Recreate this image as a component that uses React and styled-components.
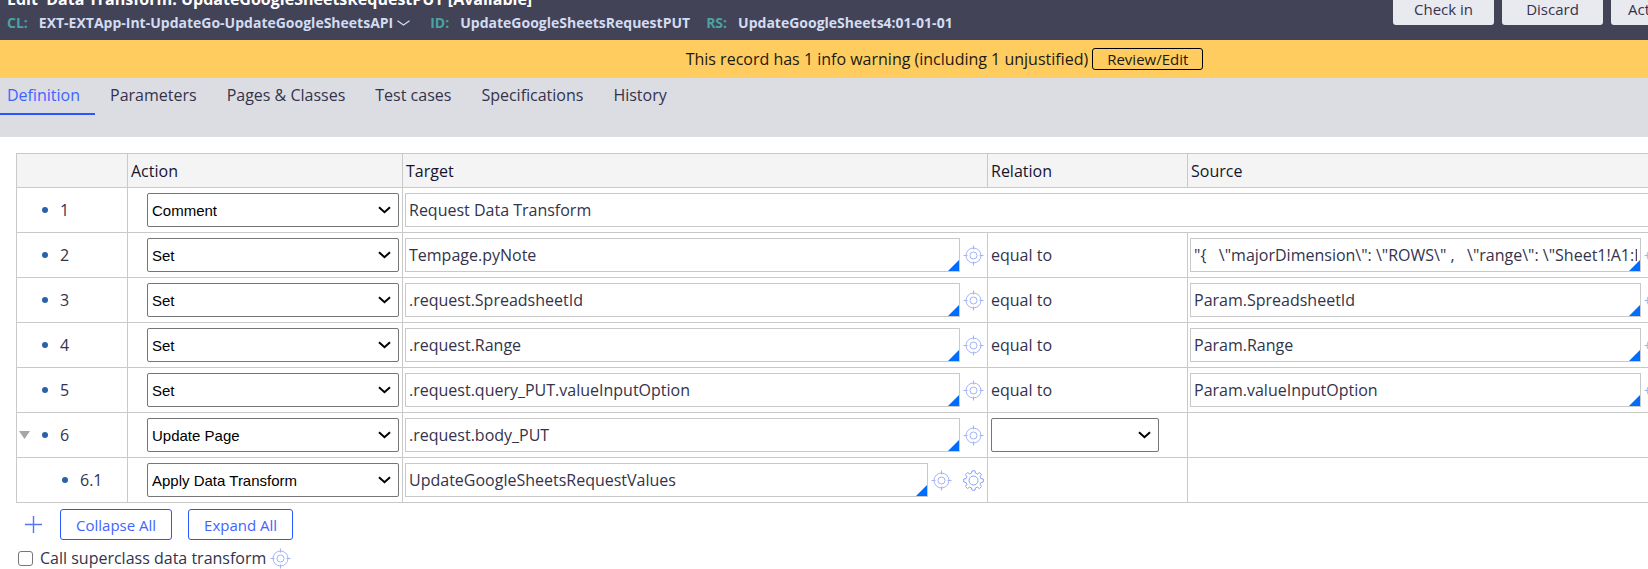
import React from 'react';
import styled, { createGlobalStyle } from 'styled-components';

const GlobalStyle = createGlobalStyle`
  *, *::before, *::after { box-sizing: border-box; }
  body {
    margin: 0;
    overflow: hidden;
    background: #fff;
    color: #33334c;
    font: 400 16px/22px "Open Sans", sans-serif;
  }
  button, input { font: inherit; color: inherit; }
`;

const Header = styled.header`
  display: flex;
  justify-content: space-between;
  align-items: flex-end;
  height: 40px;
  padding-left: 7px;
  overflow: hidden;
  background: #424357;
`;

const Heading = styled.div`
  padding-bottom: 7px;
  white-space: nowrap;
`;

const Title = styled.h1`
  margin: 0 0 3px;
  color: #fff;
  font-size: 16px;
  line-height: 22px;
  font-weight: 700;
  white-space: pre;
`;

const Keys = styled.dl`
  display: flex;
  gap: 16px;
  margin: 0;
  font-size: 14px;
  line-height: 20px;
  font-weight: 700;
`;

const KeyPair = styled.div`
  display: flex;
  align-items: center;
  gap: 11px;
  dt { color: #4aa3a3; }
  dd { display: flex; align-items: center; gap: 4px; margin: 0; color: #d3dcf2; }
  svg { margin-right: 4px; }
`;

const HeaderActions = styled.div`
  display: flex;
  flex-shrink: 0;
  gap: 8px;
  margin: 0 -64px 15px 0;
`;

const HeaderButton = styled.button`
  display: flex;
  justify-content: ${(p) => (p.$menu ? 'space-between' : 'center')};
  align-items: center;
  width: 101px;
  height: 32px;
  padding: 0 ${(p) => (p.$menu ? 17 : 0)}px;
  border: 0;
  border-radius: 3px;
  background: #e9e9f0;
  font-size: 15px;
`;

const Warning = styled.div`
  display: flex;
  justify-content: center;
  align-items: center;
  gap: 4px;
  height: 38px;
  padding-left: 241px;
  background: #ffcc60;
  color: #1c1a12;
`;

const ReviewButton = styled.button`
  height: 22px;
  padding: 0 14px;
  border: 1px solid #000;
  border-radius: 3px;
  background: transparent;
  font-size: 15px;
  line-height: 20px;
`;

const Tabs = styled.nav`
  display: flex;
  align-items: flex-start;
  height: 59px;
  background: #dcdde2;
`;

const Tab = styled.a`
  padding: 6px 15px 7px;
  border-bottom: 2px solid ${(p) => (p.$active ? '#2a55ff' : 'transparent')};
  color: ${(p) => (p.$active ? '#3f64ff' : 'inherit')};
  text-decoration: none;
  &:first-child { padding-left: 7px; }
`;

const Panel = styled.main`
  padding: 16px 16px 0;
`;

const Steps = styled.table`
  width: calc(100% + 37px);
  table-layout: fixed;
  border-collapse: collapse;
  th, td { border: 1px solid #c9c9c9; text-align: left; }
  th {
    height: 34px;
    padding: 0 3px;
    background: #f4f4f4;
    color: #14142e;
    font-weight: 400;
  }
  td { height: 45px; padding: 0 2px; }
`;

const Col = styled.col`
  width: ${(p) => p.$width};
`;

const StepLabel = styled.div`
  display: flex;
  align-items: center;
  padding-left: ${(p) => (p.$nested ? 20 : 0)}px;
`;

const ExpanderSlot = styled.span`
  display: flex;
  width: 23px;
`;

const Expander = styled.button`
  display: flex;
  padding: 0;
  border: 0;
  background: none;
`;

const Bullet = styled.span`
  width: 6px;
  height: 6px;
  margin-right: 12px;
  border-radius: 50%;
  background: #2a62a8;
`;

const SelectBox = styled.div`
  position: relative;
  width: ${(p) => p.$width};
  margin-left: ${(p) => p.$indent || 1}px;
  svg { position: absolute; right: 8px; top: 13px; pointer-events: none; }
`;

const Select = styled.select`
  display: block;
  width: 100%;
  height: 34px;
  padding: 0 24px 0 4px;
  border: 1px solid #767676;
  border-radius: 2px;
  appearance: none;
  background: #fff;
  color: #000;
  font: 15px "Liberation Sans", Arial, sans-serif;
`;

const Field = styled.div`
  display: flex;
  align-items: center;
  gap: 3px;
  padding-right: 1px;
`;

const InputBox = styled.div`
  position: relative;
  flex: 1;
  min-width: 0;
  &::after {
    content: ${(p) => (p.$corner ? '""' : 'none')};
    position: absolute;
    right: 1px;
    bottom: 1px;
    width: 11px;
    height: 11px;
    background: #006cff;
    clip-path: polygon(100% 0, 100% 100%, 0 100%);
  }
`;

const Input = styled.input`
  display: block;
  width: 100%;
  height: 34px;
  padding: 0 3px;
  border: 1px solid #c9c9c9;
  background: #fff;
`;

const IconButton = styled.button`
  display: flex;
  flex-shrink: 0;
  padding: 0;
  border: 0;
  background: none;
  color: #a3b3fa;
`;

const SettingsButton = styled(IconButton)`
  padding-left: 8px;
  color: #8c9ff8;
`;

const AddButton = styled(IconButton)`
  padding-right: 2px;
  color: #5575f7;
`;

const Relation = styled.span`
  padding-left: 1px;
`;

const Toolbar = styled.div`
  display: flex;
  align-items: center;
  gap: 16px;
  padding: 6px 0 0 9px;
`;

const OutlineButton = styled.button`
  height: 31px;
  padding: 0 15px;
  border: 1px solid #2a55ff;
  border-radius: 3px;
  background: #fff;
  color: #3f64ff;
  font-size: 15px;
  line-height: 20px;
`;

const Option = styled.div`
  display: flex;
  align-items: center;
  gap: 4px;
  padding: 7px 0 0 2px;
  label { display: flex; align-items: center; gap: 7px; }
`;

const Checkbox = styled.input`
  width: 15px;
  height: 15px;
  margin: 0;
  border: 1px solid #767676;
  border-radius: 3px;
  appearance: none;
  background: #fff;
  &:checked { background: #2a55ff; }
`;

const TargetIcon = () => (
  <svg width="21" height="21" viewBox="0 0 21 21" fill="none" stroke="currentColor">
    <circle cx="10.5" cy="10.5" r="7.5" />
    <circle cx="10.5" cy="10.5" r="3.5" />
    <path d="M10.5 .5v4M10.5 16.5v4M.5 10.5h4M16.5 10.5h4" />
  </svg>
);

const GearIcon = () => (
  <svg width="21" height="21" viewBox="0 0 21 21" fill="none" stroke="currentColor">
    <circle cx="10.5" cy="10.5" r="4.5" />
    <path d="M9 .8h3l.5 2.4 1.8.8 2.2-1.4 2 2-1.4 2.2.8 1.8 2.4.4v3l-2.4.5-.8 1.8 1.4 2.2-2 2-2.2-1.4-1.8.8-.5 2.3H9l-.5-2.3-1.8-.8-2.2 1.4-2-2 1.4-2.2-.8-1.8L.7 12V9l2.4-.4.8-1.8-1.4-2.2 2-2L6.700 4l1.800-.8z" strokeLinejoin="round" />
  </svg>
);

const ArrowIcon = () => (
  <svg width="13" height="8" viewBox="0 0 13 8" fill="none" stroke="#000" strokeWidth="2">
    <path d="M1 1.200l5.500 5 5.500-5" />
  </svg>
);

const CaretIcon = () => (
  <svg width="13" height="6" viewBox="0 0 13 6" fill="none" stroke="currentColor" strokeWidth="1.300">
    <path d="M.5.700l6 4.300 6-4.300" />
  </svg>
);

const TriangleIcon = () => (
  <svg width="11" height="8" viewBox="0 0 11 8" fill="#a6a6a6"><path d="M0 0h11L5.500 8z" /></svg>
);

const PlusIcon = () => (
  <svg width="17" height="17" viewBox="0 0 17 17" stroke="currentColor" strokeWidth="1.400">
    <path d="M8.500 0v17M0 8.500h17" />
  </svg>
);

const steps = [
  { id: '1', action: 'Comment', target: 'Request Data Transform' },
  { id: '2', action: 'Set', target: 'Tempage.pyNote', source: '"{   \\"majorDimension\\": \\"ROWS\\" ,   \\"range\\": \\"Sheet1!A1:D5\\"' },
  { id: '3', action: 'Set', target: '.request.SpreadsheetId', source: 'Param.SpreadsheetId' },
  { id: '4', action: 'Set', target: '.request.Range', source: 'Param.Range' },
  { id: '5', action: 'Set', target: '.request.query_PUT.valueInputOption', source: 'Param.valueInputOption' },
  { id: '6', action: 'Update Page', target: '.request.body_PUT' },
  { id: '6.1', action: 'Apply Data Transform', target: 'UpdateGoogleSheetsRequestValues' },
];

const actions = ['Comment', 'Set', 'Update Page', 'Apply Data Transform'];
const tabs = ['Definition', 'Parameters', 'Pages & Classes', 'Test cases', 'Specifications', 'History'];

function SelectField({ label, value, options, ...box }) {
  return (
    <SelectBox {...box}>
      <Select aria-label={label} defaultValue={value}>
        {options.map((o) => <option key={o}>{o}</option>)}
      </Select>
      <ArrowIcon />
    </SelectBox>
  );
}

function PropertyField({ label, value, settings }) {
  return (
    <Field>
      <InputBox $corner><Input aria-label={label} defaultValue={value} /></InputBox>
      <IconButton aria-label={`Open ${label}`}><TargetIcon /></IconButton>
      {settings && <SettingsButton aria-label="Settings"><GearIcon /></SettingsButton>}
    </Field>
  );
}

function StepRow({ step }) {
  const { id, action, target, source } = step;
  const comment = action === 'Comment';
  return (
    <tr>
      <td>
        <StepLabel $nested={id.includes('.')}>
          <ExpanderSlot>
            {id === '6' && <Expander aria-label="Collapse step 6"><TriangleIcon /></Expander>}
          </ExpanderSlot>
          <Bullet />
          {id}
        </StepLabel>
      </td>
      <td>
        <SelectField label={`Action ${id}`} value={action} options={actions} $width="252px" $indent={17} />
      </td>
      {comment ? (
        <td colSpan={3}>
          <InputBox><Input aria-label="Comment" defaultValue={target} /></InputBox>
        </td>
      ) : (
        <>
          <td><PropertyField label={`Target ${id}`} value={target} settings={id === '6.1'} /></td>
          <td>
            {source && <Relation>equal to</Relation>}
            {id === '6' && <SelectField label="Relation 6" value="" options={['']} $width="168px" />}
          </td>
          <td>{source && <PropertyField label={`Source ${id}`} value={source} />}</td>
        </>
      )}
    </tr>
  );
}

export default function App() {
  return (
    <>
      <GlobalStyle />
      <Header>
        <Heading>
          <Title>{'Edit  Data Transform: UpdateGoogleSheetsRequestPUT [Available]'}</Title>
          <Keys>
            <KeyPair><dt>CL:</dt><dd>EXT-EXTApp-Int-UpdateGo-UpdateGoogleSheetsAPI <CaretIcon /></dd></KeyPair>
            <KeyPair><dt>ID:</dt><dd>UpdateGoogleSheetsRequestPUT</dd></KeyPair>
            <KeyPair><dt>RS:</dt><dd>UpdateGoogleSheets4:01-01-01</dd></KeyPair>
          </Keys>
        </Heading>
        <HeaderActions>
          <HeaderButton>Check in</HeaderButton>
          <HeaderButton>Discard</HeaderButton>
          <HeaderButton $menu>Actions <CaretIcon /></HeaderButton>
        </HeaderActions>
      </Header>
      <Warning>
        <span>This record has 1 info warning (including 1 unjustified)</span>
        <ReviewButton>Review/Edit</ReviewButton>
      </Warning>
      <Tabs>
        {tabs.map((t, i) => <Tab key={t} href="#" $active={i === 0}>{t}</Tab>)}
      </Tabs>
      <Panel>
        <Steps>
          <colgroup>
            <Col $width="111px" />
            <Col $width="275px" />
            <Col $width="auto" />
            <Col $width="200px" />
            <Col $width="481px" />
          </colgroup>
          <thead>
            <tr><th /><th>Action</th><th>Target</th><th>Relation</th><th>Source</th></tr>
          </thead>
          <tbody>{steps.map((s) => <StepRow key={s.id} step={s} />)}</tbody>
        </Steps>
        <Toolbar>
          <AddButton aria-label="Add step"><PlusIcon /></AddButton>
          <OutlineButton>Collapse All</OutlineButton>
          <OutlineButton>Expand All</OutlineButton>
        </Toolbar>
        <Option>
          <label><Checkbox type="checkbox" />Call superclass data transform</label>
          <IconButton aria-label="Open superclass transform"><TargetIcon /></IconButton>
        </Option>
      </Panel>
    </>
  );
}
